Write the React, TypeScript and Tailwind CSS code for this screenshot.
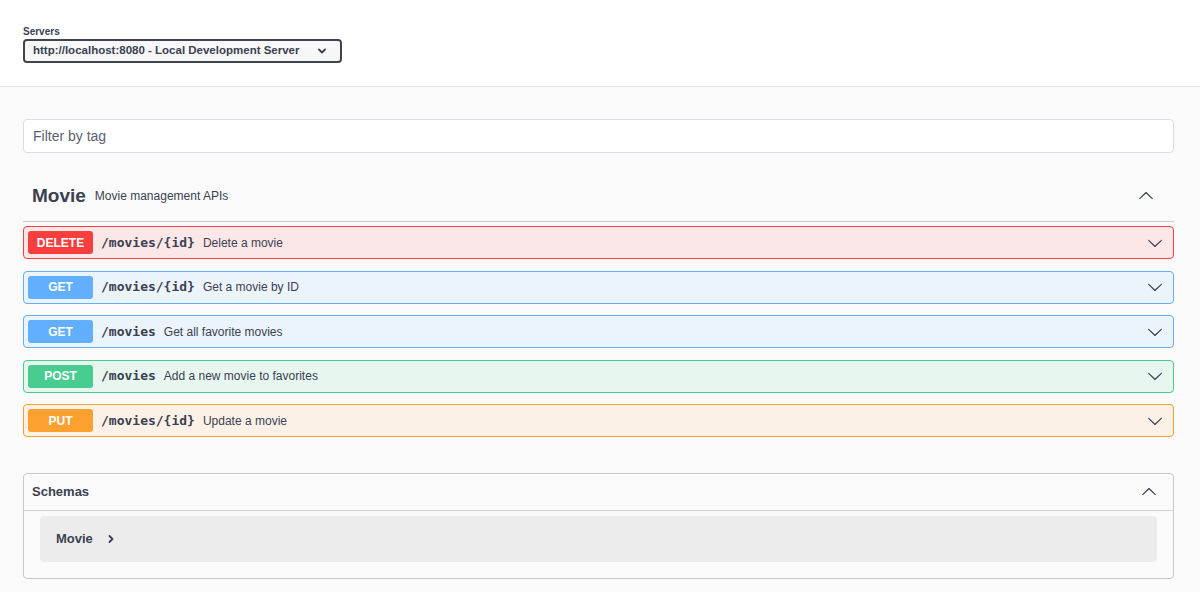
const sans = { fontFamily: '"Liberation Sans", Arial, sans-serif' }

function Chevron({ dir = 'down', className = '' }: { dir?: 'down' | 'up' | 'right'; className?: string }) {
  const rot = dir === 'up' ? 'rotate-180' : dir === 'right' ? '-rotate-90' : ''
  return (
    <svg viewBox="0 0 20 20" className={`${rot} ${className}`} fill="currentColor">
      <path d="M17.418 6.109c.272-.268.709-.268.979 0s.271.701 0 .969l-7.908 7.83c-.27.268-.707.268-.979 0l-7.908-7.83c-.27-.268-.27-.701 0-.969.271-.268.709-.268.979 0L10 13.25l7.418-7.141z" />
    </svg>
  )
}

function BoldChevron({ dir = 'down', className = '' }: { dir?: 'down' | 'right'; className?: string }) {
  return (
    <svg viewBox="0 0 10 10" className={className} fill="none" stroke="currentColor" strokeWidth={1.8} strokeLinecap="round" strokeLinejoin="round">
      {dir === 'down' ? <path d="M2 3.5 5 6.5 8 3.5" /> : <path d="M3.5 2 6.5 5 3.5 8" />}
    </svg>
  )
}

const ops = [
  { method: 'DELETE', path: '/movies/{id}', desc: 'Delete a movie', border: 'border-[#f93e3e]', bg: 'bg-[#fbe7e7]', badge: 'bg-[#f93e3e]' },
  { method: 'GET', path: '/movies/{id}', desc: 'Get a movie by ID', border: 'border-[#61affe]', bg: 'bg-[#ebf3fb]', badge: 'bg-[#61affe]' },
  { method: 'GET', path: '/movies', desc: 'Get all favorite movies', border: 'border-[#61affe]', bg: 'bg-[#ebf3fb]', badge: 'bg-[#61affe]' },
  { method: 'POST', path: '/movies', desc: 'Add a new movie to favorites', border: 'border-[#49cc90]', bg: 'bg-[#e8f6f0]', badge: 'bg-[#49cc90]' },
  { method: 'PUT', path: '/movies/{id}', desc: 'Update a movie', border: 'border-[#fca130]', bg: 'bg-[#fbf1e6]', badge: 'bg-[#fca130]' },
]

export default function App() {
  return (
    <div className="min-h-[592px] bg-[#fafafa] text-[#3b4151]" style={sans}>
      {/* Servers */}
      <div className="h-[87px] bg-white border-b border-[#e4e4e4] pl-[23px] pt-[26px]">
        <div className="text-[10px] font-bold leading-[12px] text-[#3b4151]">Servers</div>
        <div className="mt-[1px] flex h-[24px] w-[319px] items-center justify-between rounded-[4px] border-2 border-[#41444e] bg-[#f7f7f7] pl-[8px] pr-[13px]">
          <span className="text-[11.5px] font-bold text-[#3b4151]">http://localhost:8080 - Local Development Server</span>
          <BoldChevron className="h-[10px] w-[10px] text-[#3b4151]" />
        </div>
      </div>

      <div className="pl-[23px] pr-[26px] pt-[32px]">
        {/* Filter */}
        <div className="flex h-[34px] items-center rounded-[4px] border border-[#d8dde7] bg-white px-[9px] text-[14px] text-[#5b6170]">
          Filter by tag
        </div>

        {/* Tag */}
        <div className="mt-[18px] flex h-[51px] items-center border-b border-[#c8c9cd] pl-[9px] pr-[20px]">
          <span className="text-[19px] font-bold text-[#3b4151]">Movie</span>
          <span className="ml-[9px] text-[12px] text-[#3b4151]">Movie management APIs</span>
          <Chevron dir="up" className="ml-auto h-[16px] w-[16px] text-[#3b4151]" />
        </div>

        <div className="mt-[4px] flex flex-col gap-[11.5px]">
          {ops.map((op, i) => (
            <div key={i} className={`flex h-[33px] items-center rounded-[4px] border ${op.border} ${op.bg} pl-[4px] pr-[10px]`}>
              <div className={`flex h-[23px] w-[65px] items-center justify-center rounded-[3px] ${op.badge} text-[12px] font-bold text-white`}>
                {op.method}
              </div>
              <span
                className="ml-[8px] text-[13px] font-bold text-[#3b4151]"
                style={{ fontFamily: '"DejaVu Sans Mono", monospace' }}
              >
                {op.path}
              </span>
              <span className="ml-[8px] text-[12px] text-[#3b4151]">{op.desc}</span>
              <Chevron className="ml-auto h-[16px] w-[16px] text-[#3b4151]" />
            </div>
          ))}
        </div>

        {/* Schemas */}
        <div className="mt-[36px] rounded-[4px] border border-[#c8c9cd] bg-[#fafafa]">
          <div className="flex h-[37px] items-center border-b border-[#d2d3d6] pl-[8px] pr-[16px]">
            <span className="text-[13px] font-bold text-[#3b4151]">Schemas</span>
            <Chevron dir="up" className="ml-auto h-[16px] w-[16px] text-[#3b4151]" />
          </div>
          <div className="px-[16px] pt-[5px] pb-[16px]">
            <div className="flex h-[46px] items-center rounded-[4px] bg-[#ececec] pl-[16px]">
              <span className="text-[13px] font-bold text-[#3b4151]">Movie</span>
              <BoldChevron dir="right" className="ml-[13px] h-[10px] w-[10px] text-[#3b4151]" />
            </div>
          </div>
        </div>
      </div>
    </div>
  )
}
